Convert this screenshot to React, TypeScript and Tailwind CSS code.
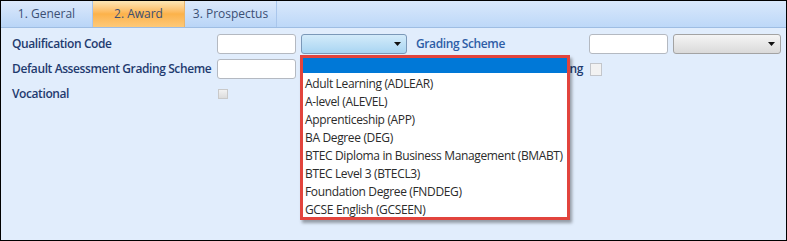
import { ReactNode } from 'react';

const qualifications = [
  'Adult Learning (ADLEAR)',
  'A-level (ALEVEL)',
  'Apprenticeship (APP)',
  'BA Degree (DEG)',
  'BTEC Diploma in Business Management (BMABT)',
  'BTEC Level 3 (BTECL3)',
  'Foundation Degree (FNDDEG)',
  'GCSE English (GCSEEN)',
];

function Tab({ label, active }: { label: string; active?: boolean }) {
  return (
    <div
      className={`w-[92px] h-full flex items-center justify-center border-r text-[12px] text-[#3b4f74] ${
        active
          ? 'bg-gradient-to-b from-[#fde7b6] via-[#fcb24a] to-[#fdc978] border-[#e9b46a]'
          : 'bg-gradient-to-b from-[#dce9fb] to-[#b9d5f7] border-[#a9c6ec]'
      }`}
    >
      {label}
    </div>
  );
}

function Label({ children, w, blue }: { children: ReactNode; w: string; blue?: boolean }) {
  return (
    <div
      className={`${w} shrink-0 text-[12px] font-semibold tracking-[-0.4px] whitespace-nowrap ${
        blue ? 'text-[#2e5da6]' : 'text-[#1f3b6f]'
      }`}
    >
      {children}
    </div>
  );
}

function TextBox() {
  return <div className="w-[79px] h-[20px] shrink-0 bg-white border border-[#b4b9c1] rounded-[3px]" />;
}

function Arrow() {
  return (
    <svg width="7" height="4" viewBox="0 0 7 4" className="shrink-0">
      <path d="M0 0h7L3.5 4z" fill="#111" />
    </svg>
  );
}

export default function App() {
  return (
    <div
      className="w-[787px] h-[241px] border border-black bg-[#e1edfc] relative overflow-hidden"
      style={{ fontFamily: '"Open Sans", "Noto Sans", sans-serif' }}
    >
      {/* Tabs */}
      <div className="h-[27px] flex bg-gradient-to-b from-[#d9e8fb] to-[#bdd8f8] border-b border-[#9ebde3]">
        <Tab label="1. General" />
        <Tab label="2. Award" active />
        <Tab label="3. Prospectus" />
      </div>

      {/* Form */}
      <div className="pl-[11px] pt-[6px] flex flex-col gap-[5px]">
        <div className="h-[20px] flex items-center">
          <Label w="w-[205px]">Qualification Code</Label>
          <TextBox />
          <div className="ml-[5px] w-[106px] h-[20px] shrink-0 rounded-[3px] border border-[#7b98b8] bg-gradient-to-b from-[#d3ebfa] to-[#a9d5f2] flex items-center justify-end pr-[5px]">
            <Arrow />
          </div>
          <Label w="w-[173px] ml-[9px]" blue>
            Grading Scheme
          </Label>
          <TextBox />
          <div className="ml-[5px] w-[108px] h-[20px] shrink-0 rounded-[3px] border border-[#a3a3a3] bg-gradient-to-b from-[#f5f5f5] to-[#dadada] flex items-center justify-end pr-[5px]">
            <Arrow />
          </div>
        </div>
        <div className="h-[20px] flex items-center">
          <Label w="w-[205px]">Default Assessment Grading Scheme</Label>
          <TextBox />
          <div className="w-[306px] shrink-0 flex items-center justify-end gap-[7px]">
            <span className="text-[12px] font-semibold tracking-[-0.4px] text-[#1f3b6f] whitespace-nowrap">
              Use Result Grading
            </span>
            <div className="w-[12px] h-[13px] border border-[#c3c6cb] bg-[#f2f2f2]" />
          </div>
        </div>
        <div className="h-[20px] flex items-center">
          <Label w="w-[206px]">Vocational</Label>
          <div className="w-[10px] h-[10px] border border-[#c9c9c9] bg-gradient-to-b from-[#f2f2f2] to-[#dcdcdc]" />
        </div>
      </div>

      {/* Open drop-down list */}
      <div className="absolute left-[299px] top-[54px] w-[270px] h-[165px] border-[3px] border-[#e2443d] bg-white shadow-[2px_3px_3px_rgba(0,0,0,0.35)] text-[12px] tracking-[-0.35px] text-[#2b2b2b]">
        <div className="h-[15px] bg-[#0078d7]" />
        <div className="pt-[2px]">
          {qualifications.map((q) => (
            <div key={q} className="h-[18px] leading-[18px] pl-[2px] whitespace-nowrap">
              {q}
            </div>
          ))}
        </div>
      </div>
    </div>
  );
}
